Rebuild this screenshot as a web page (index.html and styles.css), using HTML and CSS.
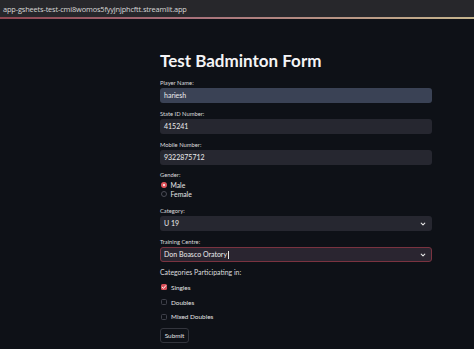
FILE: index.html
```html
<!DOCTYPE html>
<html lang="en">
<head>
<meta charset="utf-8">
<title>Test Badminton Form</title>
<link rel="stylesheet" href="styles.css">
</head>
<body>
<div class="topbar"><span class="url">app-gsheets-test-cmi8womos5fyyjnjphcftt.streamlit.app</span></div>
<div class="deco"></div>
<main class="form">
  <h1 class="title">Test Badminton Form</h1>

  <div class="field">
    <div class="label">Player Name:</div>
    <div class="input hovered">hariesh</div>
  </div>
  <div class="field">
    <div class="label">State ID Number:</div>
    <div class="input">415241</div>
  </div>
  <div class="field">
    <div class="label">Mobile Number:</div>
    <div class="input">9322875712</div>
  </div>

  <div class="field radios">
    <div class="label">Gender:</div>
    <div class="radio-row"><span class="radio on"></span><span class="opt">Male</span></div>
    <div class="radio-row"><span class="radio"></span><span class="opt">Female</span></div>
  </div>

  <div class="field after-radios">
    <div class="label">Category:</div>
    <div class="input select"><span>U 19</span>
      <svg class="chev" viewBox="0 0 10 10" width="6" height="6"><path d="M2 3.5 L5 6.5 L8 3.5" fill="none" stroke="#e6e6e6" stroke-width="1.8" stroke-linecap="round" stroke-linejoin="round"/></svg>
    </div>
  </div>
  <div class="field">
    <div class="label">Training Centre:</div>
    <div class="input select focused"><span>Don Boasco Oratory<span class="caret"></span></span>
      <svg class="chev" viewBox="0 0 10 10" width="6" height="6"><path d="M2 3.5 L5 6.5 L8 3.5" fill="none" stroke="#e6e6e6" stroke-width="1.8" stroke-linecap="round" stroke-linejoin="round"/></svg>
    </div>
  </div>

  <div class="section">Categories Participating in:</div>
  <div class="checks">
    <div class="check-row"><span class="box on"><svg viewBox="0 0 10 10" width="6" height="6"><path d="M2 5.2 L4.2 7.3 L8 2.8" fill="none" stroke="#fff" stroke-width="1.6" stroke-linecap="round" stroke-linejoin="round"/></svg></span><span class="opt">Singles</span></div>
    <div class="check-row"><span class="box"></span><span class="opt">Doubles</span></div>
    <div class="check-row"><span class="box"></span><span class="opt">Mixed Doubles</span></div>
  </div>

  <button class="submit" type="button">Submit</button>
</main>
</body>
</html>
```

FILE: styles.css
```css
* { box-sizing: border-box; }
html, body { margin: 0; padding: 0; }
body {
  background: #0e1117;
  color: #e8e8ea;
  font-family: Lato, "Noto Sans", sans-serif;
  width: 474px;
  height: 349px;
  overflow: hidden;
}
.topbar {
  height: 17px;
  background: #27272b;
  padding-left: 3px;
  display: flex;
  align-items: center;
}
.url {
  font-family: "Open Sans", "Noto Sans", sans-serif;
  font-size: 7.4px;
  color: #d8d8d8;
  letter-spacing: -0.15px;
}
.deco {
  height: 2px;
  background: linear-gradient(90deg, #8e4651 0%, #a7707a 40%, #c6b58e 100%);
}
.form {
  margin-left: 160px;
  width: 272px;
  display: flex;
  flex-direction: column;
}
.title {
  margin: 32px 0 0 0;
  font-size: 17px;
  font-weight: 700;
  line-height: 20px;
  height: 20px;
  color: #f4f4f6;
}
.field {
  display: flex;
  flex-direction: column;
  margin-top: 7px;
}
.title + .field { margin-top: 8px; }
.label {
  font-size: 5.8px;
  line-height: 7px;
  height: 7px;
  color: #dcdcde;
  margin-bottom: 2px;
}
.input {
  height: 15px;
  background: #262730;
  border-radius: 3px;
  border: 1px solid transparent;
  font-size: 7px;
  line-height: 13px;
  padding: 0 3px;
  color: #ececee;
  display: flex;
  align-items: center;
  flex-shrink: 0;
}
.input.hovered { background: #3a4255; }
.select { justify-content: space-between; }
.select .chev { margin-right: 2px; }
.focused {
  border-color: #7a3340;
  background: #2a2530;
}
.caret {
  display: inline-block;
  width: 0.7px;
  height: 8px;
  background: #e8e8e8;
  vertical-align: middle;
  margin-left: 0.5px;
}
.radios { margin-top: 6px; }
.radio-row {
  display: flex;
  align-items: center;
  height: 9.5px;
  flex-shrink: 0;
}
.radio {
  width: 6px;
  height: 6px;
  border-radius: 50%;
  border: 1px solid #4a4c55;
  margin-left: 1px;
  margin-right: 3.5px;
}
.radio.on {
  background: #e0545c;
  border: none;
  position: relative;
}
.radio.on::after {
  content: "";
  position: absolute;
  left: 2px;
  top: 2px;
  width: 2px;
  height: 2px;
  border-radius: 50%;
  background: #fff;
}
.opt {
  font-size: 6.4px;
  color: #e4e4e6;
}
.radio-row .opt { font-size: 6.8px; }
.field.after-radios { margin-top: 8px; }
.section {
  margin-top: 6px;
  font-size: 6.9px;
  line-height: 9px;
  height: 9px;
  color: #dcdcde;
}
.checks {
  margin-top: 3px;
  display: flex;
  flex-direction: column;
}
.check-row {
  display: flex;
  align-items: center;
  height: 14.7px;
  flex-shrink: 0;
}
.box {
  width: 6px;
  height: 6px;
  border-radius: 1.5px;
  border: 1px solid #3f414a;
  margin-left: 1px;
  margin-right: 4px;
  display: flex;
  align-items: center;
  justify-content: center;
}
.box.on {
  background: #d94f58;
  border: none;
}
.submit {
  align-self: flex-start;
  margin-top: 4px;
  width: 29px;
  height: 15px;
  padding: 0;
  background: #0e1117;
  border: 1px solid #33353d;
  border-radius: 3px;
  color: #e4e4e6;
  font-family: Lato, "Noto Sans", sans-serif;
  font-size: 6.4px;
}
```
